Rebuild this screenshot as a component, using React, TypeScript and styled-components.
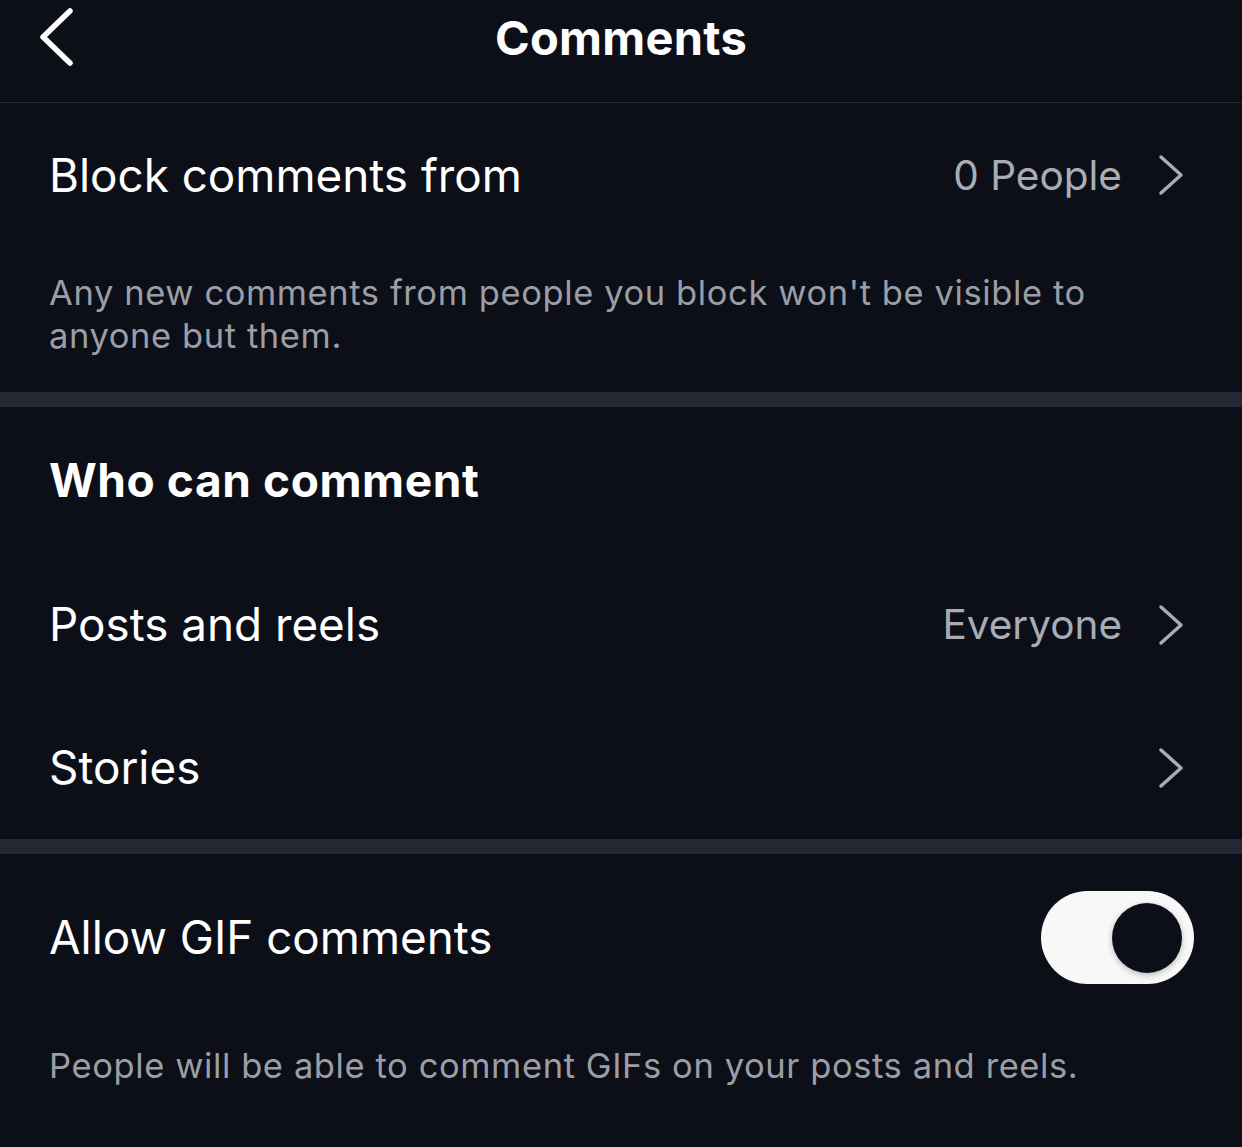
import React, { useState } from 'react';
import styled, { createGlobalStyle } from 'styled-components';

// ===== GLOBAL =====
const GlobalStyle = createGlobalStyle`
  html, body {
    margin: 0;
    padding: 0;
    background: #0c0f17;
  }
  body {
    font-family: Inter, "Noto Sans", "Liberation Sans", sans-serif;
    -webkit-font-smoothing: antialiased;
  }
`;

// ===== STYLED COMPONENTS =====
const Screen = styled.div`
  width: 1242px;
  min-height: 1147px;
  background: #0c0f17;
  color: #ffffff;
`;

const Header = styled.header`
  position: relative;
  display: flex;
  align-items: center;
  justify-content: center;
  height: 103px;
  border-bottom: 1px solid #262a33;
  box-sizing: border-box;
  padding-bottom: 27px;
`;

const BackButton = styled.button`
  position: absolute;
  left: 36px;
  top: 6px;
  display: flex;
  padding: 0;
  border: none;
  background: transparent;
  cursor: pointer;
`;

const Title = styled.h1`
  margin: 0;
  font-size: 47px;
  font-weight: 700;
  letter-spacing: 0.3px;
  color: #ffffff;
`;

const Row = styled.div<{ h: number }>`
  display: flex;
  align-items: center;
  justify-content: space-between;
  height: ${p => p.h}px;
  padding: 0 58px 0 49px;
  box-sizing: border-box;
`;

const RowLabel = styled.span<{ bold?: boolean }>`
  font-size: ${p => (p.bold ? '46px' : '45.8px')};
  font-weight: ${p => (p.bold ? 700 : 400)};
  color: #ffffff;
  letter-spacing: ${p => (p.bold ? '0.6px' : '0')};
`;

const RowRight = styled.div`
  display: flex;
  align-items: center;
  gap: 36px;
`;

const RowValue = styled.span`
  font-size: 40.5px;
  color: #a9acb4;
`;

const Description = styled.p<{ pt: number; pb: number }>`
  margin: 0;
  padding: ${p => p.pt}px 120px ${p => p.pb}px 49px;
  font-size: 34.5px;
  line-height: 43px;
  letter-spacing: 0.6px;
  color: #9b9ea6;
`;

const Band = styled.div`
  height: 15px;
  background: #242832;
`;

const ToggleTrack = styled.button<{ on: boolean }>`
  position: relative;
  width: 153px;
  height: 93px;
  margin-right: -10px;
  border: none;
  border-radius: 47px;
  padding: 0;
  background: ${p => (p.on ? '#f8f8f9' : '#3a3d45')};
  cursor: pointer;
`;

const ToggleKnob = styled.span<{ on: boolean }>`
  position: absolute;
  top: 12px;
  left: ${p => (p.on ? '71px' : '12px')};
  width: 70px;
  height: 70px;
  border-radius: 50%;
  background: #0c0f17;
  box-shadow: 0 2px 6px rgba(0, 0, 0, 0.25);
`;

// ===== ICONS =====
const BackIcon = () => (
  <svg width="40" height="60" viewBox="0 0 40 60" fill="none">
    <path d="M34 5 L7 31 L34 57" stroke="#ffffff" strokeWidth="5.5" strokeLinecap="round" strokeLinejoin="round" />
  </svg>
);

const Chevron = () => (
  <svg width="26" height="42" viewBox="0 0 26 42" fill="none">
    <path d="M3 3 L23 21 L3 39" stroke="#a9acb4" strokeWidth="3.5" strokeLinecap="round" strokeLinejoin="round" />
  </svg>
);

// ===== COMPONENT =====
export default function App() {
  const [gifOn, setGifOn] = useState(true);

  return (
    <>
      <GlobalStyle />
      <Screen>
        <Header>
          <BackButton aria-label="Back">
            <BackIcon />
          </BackButton>
          <Title>Comments</Title>
        </Header>

        <Row h={144}>
          <RowLabel>Block comments from</RowLabel>
          <RowRight>
            <RowValue>0 People</RowValue>
            <Chevron />
          </RowRight>
        </Row>
        <Description pt={24} pb={35}>
          Any new comments from people you block won't be visible to anyone but them.
        </Description>

        <Band />

        <Row h={146}>
          <RowLabel bold>Who can comment</RowLabel>
        </Row>
        <Row h={143}>
          <RowLabel>Posts and reels</RowLabel>
          <RowRight>
            <RowValue>Everyone</RowValue>
            <Chevron />
          </RowRight>
        </Row>
        <Row h={143}>
          <RowLabel>Stories</RowLabel>
          <RowRight>
            <Chevron />
          </RowRight>
        </Row>

        <Band />

        <Row h={166}>
          <RowLabel>Allow GIF comments</RowLabel>
          <ToggleTrack on={gifOn} onClick={() => setGifOn(!gifOn)} aria-label="Allow GIF comments">
            <ToggleKnob on={gifOn} />
          </ToggleTrack>
        </Row>
        <Description pt={24} pb={40}>
          People will be able to comment GIFs on your posts and reels.
        </Description>
      </Screen>
    </>
  );
}
